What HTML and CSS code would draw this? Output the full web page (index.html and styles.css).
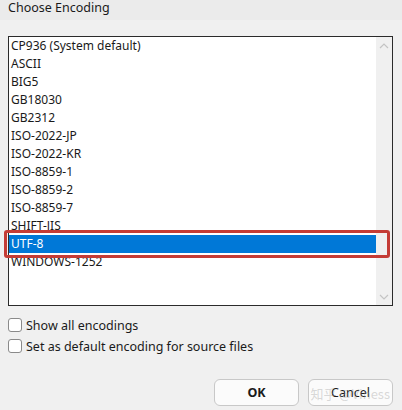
FILE: index.html
```html
<!DOCTYPE html>
<html lang="en">
<head>
    <meta charset="UTF-8">
    <meta name="viewport" content="width=device-width, initial-scale=1.0">
    <title>Choose Encoding</title>
    <link rel="stylesheet" href="styles.css">
</head>
<body>
    <div class="dialog">
        <div class="titlebar">Choose Encoding</div>

        <div class="listbox">
            <ul class="items">
                <li>CP936 (System default)</li>
                <li>ASCII</li>
                <li>BIG5</li>
                <li>GB18030</li>
                <li>GB2312</li>
                <li>ISO-2022-JP</li>
                <li>ISO-2022-KR</li>
                <li>ISO-8859-1</li>
                <li>ISO-8859-2</li>
                <li>ISO-8859-7</li>
                <li>SHIFT-JIS</li>
                <li class="selected">UTF-8</li>
                <li>WINDOWS-1252</li>
            </ul>
            <div class="scrollbar">
                <svg width="10" height="6" viewBox="0 0 10 6"><path d="M1 5 L5 1 L9 5" fill="none" stroke="#c4c4c4" stroke-width="1.2"/></svg>
                <svg width="10" height="6" viewBox="0 0 10 6"><path d="M1 1 L5 5 L9 1" fill="none" stroke="#c4c4c4" stroke-width="1.2"/></svg>
            </div>
        </div>

        <div class="options">
            <label class="check"><span class="box"></span>Show all encodings</label>
            <label class="check"><span class="box"></span>Set as default encoding for source files</label>
        </div>

        <div class="buttons">
            <button class="btn primary">OK</button>
            <button class="btn">Cancel</button>
            <span class="watermark">知乎 @Viness</span>
        </div>
    </div>
</body>
</html>
```

FILE: styles.css
```css
body {
    margin: 0;
    background: #f0f0f0;
    font-family: "Noto Sans", "Open Sans", sans-serif;
    font-size: 12px;
    color: #1a1a1a;
}
.dialog {
    width: 402px;
    height: 410px;
    display: flex;
    flex-direction: column;
}
.titlebar {
    height: 20px;
    line-height: 16px;
    padding-left: 8px;
    background: #ebebeb;
    font-size: 12.5px;
}
.listbox {
    margin: 16px 9px 0 8px;
    height: 268px;
    border: 1px solid #2b2b2b;
    background: #fff;
    display: flex;
}
.items {
    list-style: none;
    margin: 0;
    padding: 0;
    flex: 1;
}
.items li {
    height: 18px;
    line-height: 18px;
    padding-left: 2px;
    white-space: nowrap;
}
.items li.selected {
    background: #0078d7;
    color: #fff;
    position: relative;
}
.items li.selected::after {
    content: "";
    position: absolute;
    left: -5px;
    right: -14px;
    top: -5px;
    bottom: -5px;
    border: 3px solid #c43c36;
    border-radius: 3px;
}
.scrollbar {
    width: 16px;
    background: #f0f0f0;
    display: flex;
    flex-direction: column;
    justify-content: space-between;
    align-items: center;
    padding: 6px 0 5px;
}
.options {
    margin: 12px 0 0 8px;
    display: flex;
    flex-direction: column;
    gap: 7px;
}
.check {
    display: flex;
    align-items: center;
    gap: 4px;
    font-size: 12.5px;
    height: 14px;
}
.box {
    width: 12px;
    height: 12px;
    border: 1px solid #8a8a8a;
    border-radius: 3px;
    background: #fff;
}
.buttons {
    margin-top: auto;
    margin-bottom: 4px;
    padding-right: 9px;
    display: flex;
    justify-content: flex-end;
    gap: 9px;
    position: relative;
}
.btn {
    width: 85px;
    height: 27px;
    border: 1px solid #c8c8c8;
    border-radius: 6px;
    background: #fbfbfb;
    font-family: "Noto Sans", "Open Sans", sans-serif;
    font-size: 12.5px;
    color: #1a1a1a;
    padding: 0;
}
.btn.primary {
    font-weight: bold;
}
.watermark {
    position: absolute;
    right: 12px;
    top: 5px;
    font-family: "Noto Sans CJK SC", sans-serif;
    font-size: 13px;
    color: rgba(160, 160, 160, 0.4);
    pointer-events: none;
}
```
